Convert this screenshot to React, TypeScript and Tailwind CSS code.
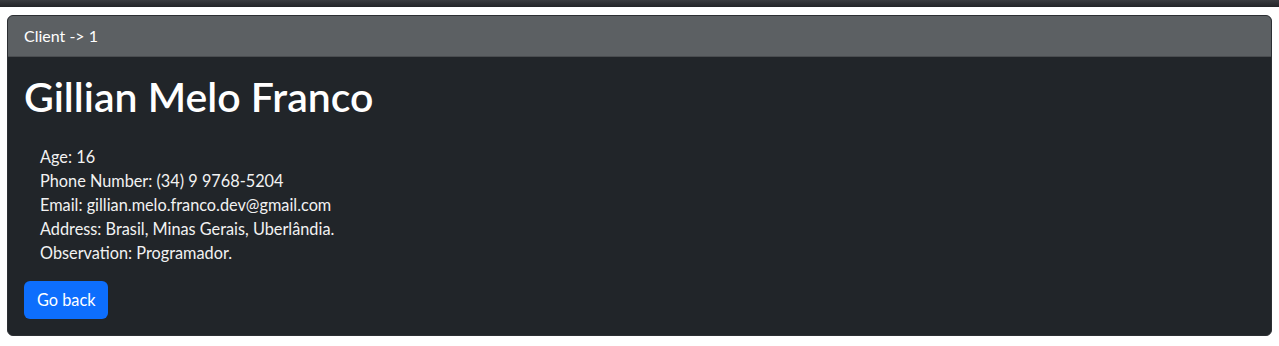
export default function App() {
  const rows = [
    "Age: 16",
    "Phone Number: (34) 9 9768-5204",
    "Email: gillian.melo.franco.dev@gmail.com",
    "Address: Brasil, Minas Gerais, Uberlândia.",
    "Observation: Programador.",
  ];

  return (
    <div className="min-h-[346px] bg-white text-base font-['Lato',sans-serif] text-white">
      {/* navbar edge */}
      <div className="h-[7px] bg-gradient-to-b from-[#3a3c40] to-[#232528]" />

      <div className="px-[7px] pt-[8px]">
        <div className="rounded-[6px] border border-[#2c2f33] bg-[#212529] overflow-hidden">
          <div className="px-4 py-2 leading-6 bg-[#5c6063] border-b border-[#4a4d50]">
            Client -&gt; 1
          </div>
          <div className="p-4">
            <h1 className="text-[41px] leading-[48px] font-semibold mb-6">Gillian Melo Franco</h1>
            <ul className="pl-4 mb-4 text-[16.3px]">
              {rows.map((row) => (
                <li key={row} className="leading-6 text-[#f2f2f2]">
                  {row}
                </li>
              ))}
            </ul>
            <button className="h-[38px] px-[13px] rounded-[6px] bg-[#0d6efd] text-white text-[16.3px] leading-6">
              Go back
            </button>
          </div>
        </div>
      </div>
    </div>
  );
}
